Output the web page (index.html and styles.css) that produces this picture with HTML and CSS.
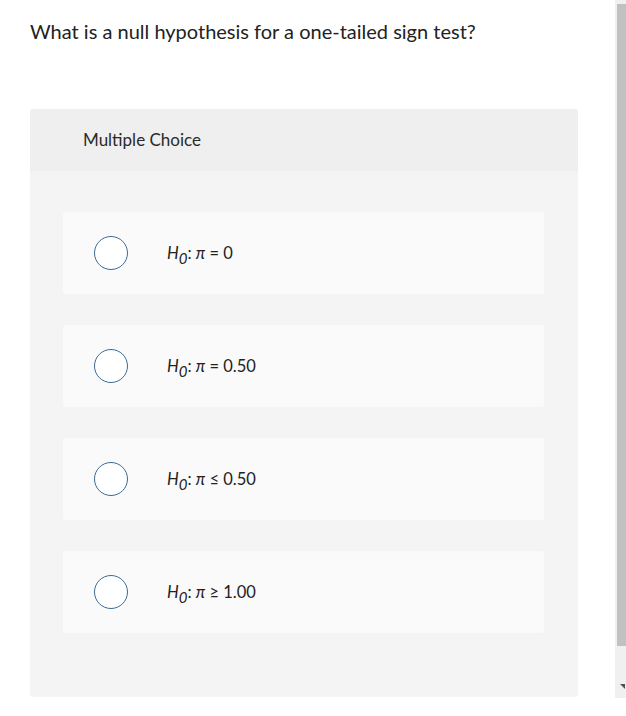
FILE: index.html
```html
<!DOCTYPE html>
<html>
<head>
<meta charset="utf-8">
<link rel="stylesheet" href="styles.css">
</head>
<body>
<main class="page">
  <p class="question">What is a null hypothesis for a one-tailed sign test?</p>
  <section class="card">
    <header class="card-head">Multiple Choice</header>
    <div class="card-body">
      <div class="option"><span class="radio"></span><span class="math"><i>H</i><sub><i>0</i></sub>: <i>π</i> = 0</span></div>
      <div class="option"><span class="radio"></span><span class="math"><i>H</i><sub><i>0</i></sub>: <i>π</i> = 0.50</span></div>
      <div class="option"><span class="radio"></span><span class="math"><i>H</i><sub><i>0</i></sub>: <i>π</i> ≤ 0.50</span></div>
      <div class="option"><span class="radio"></span><span class="math"><i>H</i><sub><i>0</i></sub>: <i>π</i> ≥ 1.00</span></div>
    </div>
  </section>
</main>
<div class="scrollbar"><div class="thumb"></div><div class="arrow"></div></div>
</body>
</html>
```
FILE: styles.css
```css
html, body { margin: 0; padding: 0; background: #fff; overflow: hidden; }
body { font-family: Lato, "Open Sans", sans-serif; color: #1e1e1e; }
.page { padding: 19px 48px 0 30px; width: 548px; }
.question { margin: 0; font-size: 20px; line-height: 24px; color: #222; }
.card { margin-top: 66px; border-radius: 3px; overflow: hidden; background: #f4f4f4; }
.card-head { height: 62px; background: #efefef; padding-left: 53px; display: flex; align-items: center; font-size: 17px; color: #2a2a2a; padding-bottom: 1px; box-sizing: border-box; }
.card-body { padding: 41px 34px 64px 33px; display: flex; flex-direction: column; gap: 31px; }
.option { height: 82px; background: #fafafa; border-radius: 3px; display: flex; align-items: center; padding-left: 31px; }
.radio { width: 32px; height: 32px; border: 1.5px solid #3d6a97; border-radius: 50%; background: #fff; flex: none; margin-top: -1px; }
.math { margin-left: 39px; font-size: 16.5px; color: #222; }
.math sub { font-size: 15px; vertical-align: -5px; line-height: 0; }
.scrollbar { position: fixed; top: 0; right: 0; width: 11px; height: 698px; background: #f0f0f0; }
.thumb { position: absolute; top: 4px; left: 2px; right: 0; height: 642px; background: #c1c1c1; }
.arrow { position: absolute; left: 5px; top: 684px; width: 0; height: 0; border-left: 5px solid transparent; border-top: 5px solid #505050; }
```
